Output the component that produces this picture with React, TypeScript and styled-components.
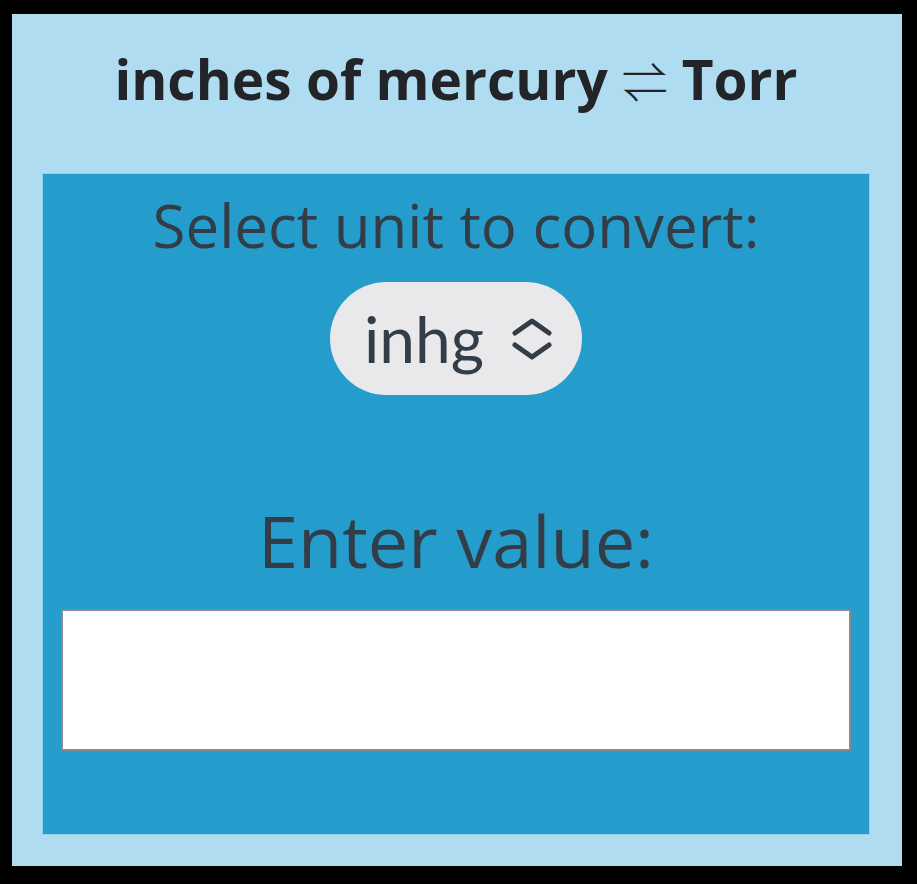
import React, { useState } from 'react';
import styled, { createGlobalStyle } from 'styled-components';

const GlobalStyle = createGlobalStyle`
  html, body {
    margin: 0;
    padding: 0;
    background: #000;
  }
  body {
    font-family: 'Open Sans', sans-serif;
  }
`;

const Frame = styled.div`
  width: 890px;
  height: 852px;
  margin: 14px 0 0 12px;
  box-sizing: border-box;
  background: #afdcf0;
  padding: 0 32px 31px 30px;
  display: flex;
  flex-direction: column;
`;

const Title = styled.h1`
  margin: 0;
  height: 159px;
  box-sizing: border-box;
  padding-bottom: 30px;
  display: flex;
  align-items: center;
  justify-content: center;
  font-family: 'Open Sans', sans-serif;
  font-weight: 700;
  font-size: 55px;
  color: #222428;
`;

const Arrow = styled.span`
  font-family: 'Noto Sans CJK JP', 'DejaVu Sans', sans-serif;
  font-weight: 300;
  font-size: 46px;
  margin: 0 14px;
`;

const Panel = styled.div`
  flex: 1;
  background: #259dcc;
  border: 1px solid #8fd3ee;
  display: flex;
  flex-direction: column;
  align-items: center;
  padding: 21px 19px 0 19px;
`;

const Label = styled.div<{ size: number }>`
  font-family: 'Open Sans', sans-serif;
  font-size: ${p => p.size}px;
  color: #333d47;
  line-height: 1;
`;

const Select = styled.div`
  margin-top: 27px;
  width: 252px;
  height: 113px;
  border-radius: 57px;
  background: #e9e9ec;
  display: flex;
  align-items: center;
  justify-content: center;
  gap: 28px;
  font-family: 'Lato', sans-serif;
  font-size: 64px;
  color: #333d47;
  box-sizing: border-box;
  padding-left: 4px;
`;

const EnterLabel = styled(Label)`
  margin-top: 109px;
`;

const Input = styled.input`
  margin-top: 33px;
  width: 790px;
  height: 142px;
  box-sizing: border-box;
  border: 2px solid #8a8a8e;
  background: #fff;
  font-size: 48px;
  font-family: 'Open Sans', sans-serif;
  outline: none;
`;

const UpDown = () => (
  <svg width="40" height="42" viewBox="0 0 40 42" fill="none" stroke="#333d47" strokeWidth="5" strokeLinecap="round" strokeLinejoin="round">
    <polyline points="3,15 20,3 37,15" />
    <polyline points="3,27 20,39 37,27" />
  </svg>
);

export default function App() {
  const [value, setValue] = useState('');
  return (
    <>
      <GlobalStyle />
      <Frame>
        <Title>
          inches of mercury<Arrow>⇌</Arrow>Torr
        </Title>
        <Panel>
          <Label size={60}>Select unit to convert:</Label>
          <Select>
            <span>inhg</span>
            <UpDown />
          </Select>
          <EnterLabel size={72}>Enter value:</EnterLabel>
          <Input value={value} onChange={e => setValue(e.target.value)} />
        </Panel>
      </Frame>
    </>
  );
}
